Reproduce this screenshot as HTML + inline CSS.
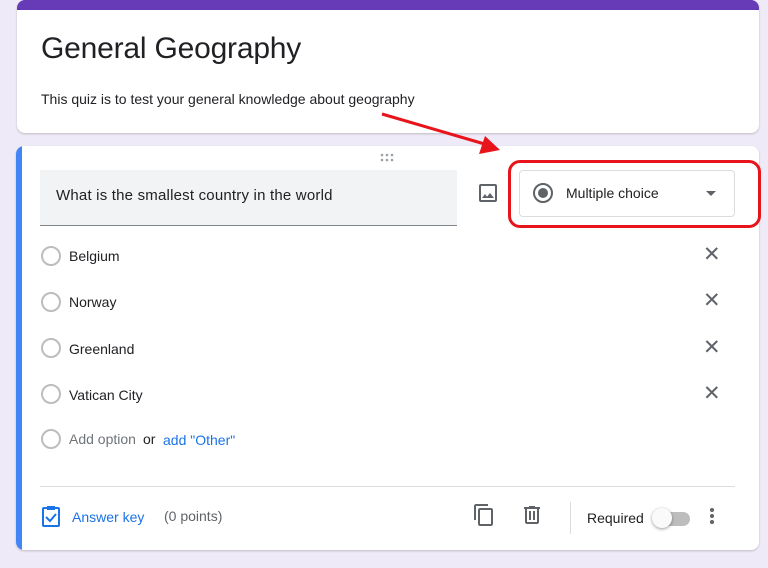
<!DOCTYPE html>
<html><head><style>
body{margin:0;width:768px;height:568px;background:#efeaf7;font-family:"Liberation Sans",sans-serif;position:relative;overflow:hidden}
.a{position:absolute}
.card{background:#fff;border-radius:8px;box-shadow:0 1px 2px rgba(0,0,0,.2)}
.rad{width:20px;height:20px;border:2px solid #bdbdbd;border-radius:50%;box-sizing:border-box}
.opt{font-size:14px;color:#202124}
.x{font-size:21px;color:#5f6368}
</style></head><body>
<div class="a card" style="left:17px;top:0;width:742px;height:133px;overflow:hidden">
 <div class="a" style="left:0;top:0;width:742px;height:10px;background:#673ab7"></div>
 <div class="a" style="left:24px;top:32px;font-size:30px;color:#202124;letter-spacing:-0.2px">General Geography</div>
 <div class="a" style="left:24px;top:91px;font-size:14px;color:#202124">This quiz is to test your general knowledge about geography</div>
</div>
<div class="a card" style="left:16px;top:146px;width:743px;height:404px;overflow:hidden">
 <div class="a" style="left:0;top:0;width:6px;height:404px;background:#4285f4"></div>
 <svg class="a" style="left:364px;top:7px" width="16" height="10"><g fill="#9aa0a6"><circle cx="2" cy="2" r="1.3"/><circle cx="7" cy="2" r="1.3"/><circle cx="12" cy="2" r="1.3"/><circle cx="2" cy="7" r="1.3"/><circle cx="7" cy="7" r="1.3"/><circle cx="12" cy="7" r="1.3"/></g></svg>
 <div class="a" style="left:24px;top:24px;width:417px;height:55px;background:#f1f3f4;border-bottom:1px solid #80868b"></div>
 <div class="a" style="left:40px;top:41px;font-size:15px;color:#202124;letter-spacing:0.2px">What is the smallest country in the world</div>
 <svg class="a" style="left:460px;top:35px" width="24" height="24" viewBox="0 0 24 24"><path d="M19 3H5a2 2 0 0 0-2 2v14a2 2 0 0 0 2 2h14a2 2 0 0 0 2-2V5a2 2 0 0 0-2-2zm0 16H5V5h14zm-5-7l-3 3.7L9 13l-3 4h12z" fill="#5f6368"/></svg>
 <div class="a" style="left:503px;top:24px;width:216px;height:47px;border:1px solid #dadce0;border-radius:4px;box-sizing:border-box"></div>
 <div class="a" style="left:517px;top:37px;width:20px;height:20px;border:2px solid #5f6368;border-radius:50%;box-sizing:border-box"></div>
 <div class="a" style="left:522px;top:42px;width:10px;height:10px;background:#5f6368;border-radius:50%"></div>
 <div class="a" style="left:550px;top:39px;font-size:14px;color:#202124">Multiple choice</div>
 <div class="a" style="left:690px;top:45px;width:0;height:0;border-left:5px solid transparent;border-right:5px solid transparent;border-top:5px solid #5f6368"></div>
 <div class="a rad" style="left:25px;top:100px"></div>
 <div class="a opt" style="left:53px;top:102px">Belgium</div><div class="a x" style="left:687px;top:96px">✕</div>
 <div class="a rad" style="left:25px;top:146px"></div>
 <div class="a opt" style="left:53px;top:148px">Norway</div><div class="a x" style="left:687px;top:142px">✕</div>
 <div class="a rad" style="left:25px;top:192px"></div>
 <div class="a opt" style="left:53px;top:195px">Greenland</div><div class="a x" style="left:687px;top:189px">✕</div>
 <div class="a rad" style="left:25px;top:238px"></div>
 <div class="a opt" style="left:53px;top:241px">Vatican City</div><div class="a x" style="left:687px;top:235px">✕</div>
 <div class="a rad" style="left:25px;top:283px"></div>
 <div class="a" style="left:53px;top:285px;font-size:14px;color:#70757a">Add option</div>
 <div class="a" style="left:127px;top:285px;font-size:14px;color:#202124">or</div>
 <div class="a" style="left:147px;top:286px;font-size:14px;color:#1a73e8">add "Other"</div>
 <div class="a" style="left:24px;top:340px;width:695px;height:1px;background:#dadce0"></div>
 <svg class="a" style="left:24px;top:358px" width="22" height="24" viewBox="0 0 22 24"><rect x="3" y="4" width="16" height="18" rx="1" fill="none" stroke="#1a73e8" stroke-width="2"/><rect x="7" y="2" width="8" height="4" fill="#1a73e8"/><path d="M6 13l4 4 6-7" fill="none" stroke="#1a73e8" stroke-width="2"/></svg>
 <div class="a" style="left:56px;top:363px;font-size:14px;color:#1a73e8">Answer key</div>
 <div class="a" style="left:148px;top:362px;font-size:14px;color:#5f6368">(0 points)</div>
 <svg class="a" style="left:456px;top:357px" width="24" height="24" viewBox="0 0 24 24"><path d="M16 1H4c-1.1 0-2 .9-2 2v14h2V3h12V1zm3 4H8c-1.1 0-2 .9-2 2v14c0 1.1.9 2 2 2h11c1.1 0 2-.9 2-2V7c0-1.1-.9-2-2-2zm0 16H8V7h11v14z" fill="#5f6368"/></svg>
 <svg class="a" style="left:504px;top:357px" width="24" height="24" viewBox="0 0 24 24"><path d="M15 4V3H9v1H4v2h1v13c0 1.1.9 2 2 2h10c1.1 0 2-.9 2-2V6h1V4h-5zm2 15H7V6h10v13zM9 8h2v9H9zm4 0h2v9h-2z" fill="#5f6368"/></svg>
 <div class="a" style="left:554px;top:356px;width:1px;height:32px;background:#dadce0"></div>
 <div class="a" style="left:571px;top:364px;font-size:14px;color:#202124">Required</div>
 <div class="a" style="left:640px;top:366px;width:34px;height:14px;border-radius:7px;background:#bdbdbd"></div>
 <div class="a" style="left:636px;top:362px;width:20px;height:20px;border-radius:50%;background:#fafafa;box-shadow:0 1px 3px rgba(0,0,0,.4)"></div>
 <div class="a" style="left:694px;top:362px;width:4px;height:4px;border-radius:50%;background:#5f6368;box-shadow:0 6px 0 #5f6368,0 12px 0 #5f6368"></div>
</div>
<div class="a" style="left:508px;top:160px;width:253px;height:68px;border:3px solid #e8141b;border-radius:12px;box-sizing:border-box"></div>
<svg class="a" style="left:0;top:0" width="768" height="568"><line x1="382" y1="114" x2="488" y2="145" stroke="#e8141b" stroke-width="3"/><polygon points="500,150 479,154 485,136" fill="#e8141b"/></svg>
</body></html>
